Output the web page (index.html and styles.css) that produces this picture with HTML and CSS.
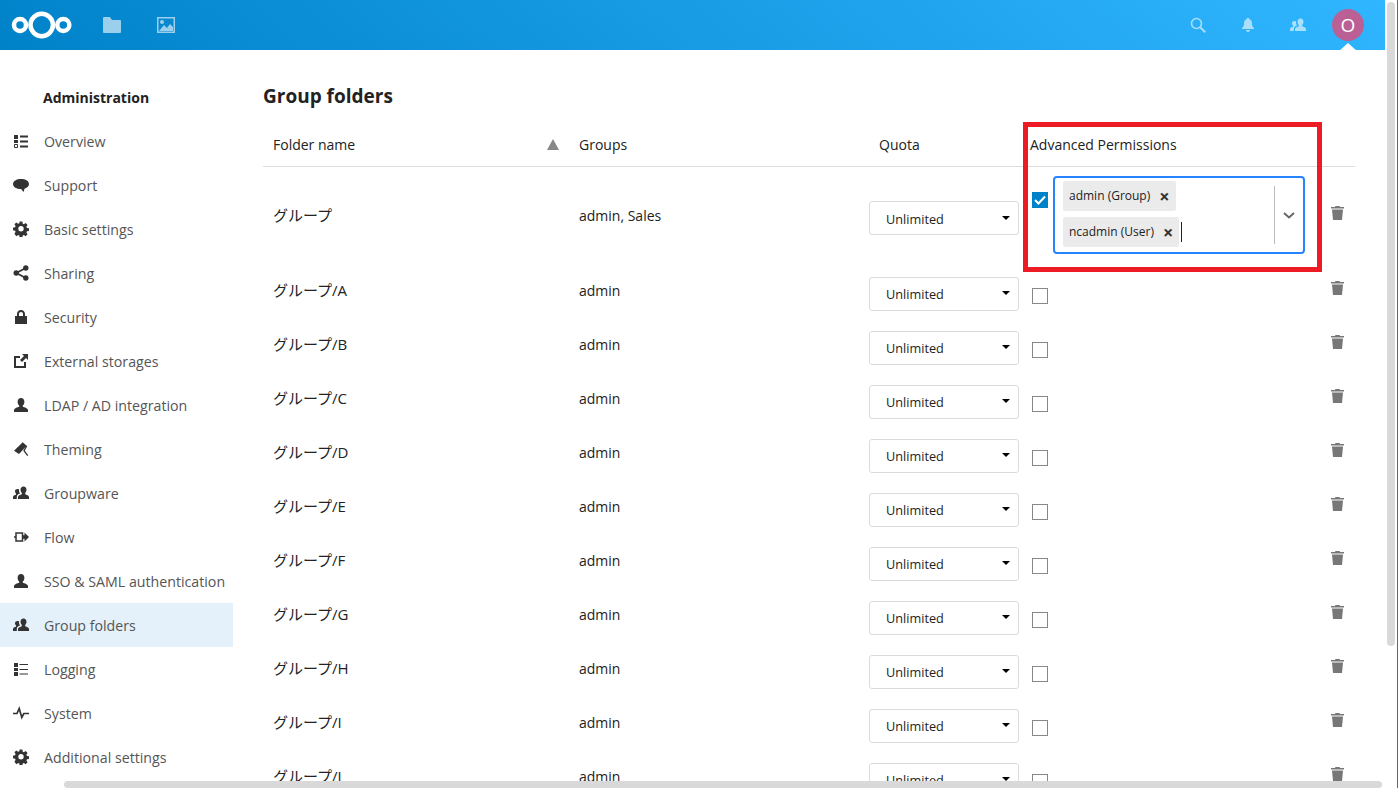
FILE: index.html
```html
<!DOCTYPE html>
<html lang="en">
<head>
    <meta charset="UTF-8">
    <meta name="viewport" content="width=device-width, initial-scale=1.0">
    <title>Group folders</title>
    <link rel="stylesheet" href="styles.css">
</head>
<body>
    <svg class="sprite" width="0" height="0">
        <symbol id="i-list" viewBox="0 0 16 16"><path d="M1 2h4v4H1zM7 2.500h8v2H7zM1 7h4v3H1zM7 7.500h8v2H7zM7 12.500h8v2H7z"/><path d="M1.500 11.500h3v3h-3z" fill="none" stroke="currentColor"/></symbol>
        <symbol id="i-log" viewBox="0 0 16 16"><path d="M1 2h4v4H1zM1 7h4v3H1zM1 11h4v4H1zM6.500 3h8.500v1H6.500zM6.500 8h8.500v1H6.500zM6.500 12.500h8.500v1H6.500z"/></symbol>
        <symbol id="i-chat" viewBox="0 0 16 16"><path d="M8 2c4.400 0 8 1.900 8 5 0 2.400-2.200 4.100-4.600 4.700-.1 1.100-.3 2.100-.9 3.300-.9-1.100-1.700-2.200-2.300-3-4.600 0-8.200-2-8.200-5s3.600-5 8-5z"/></symbol>
        <symbol id="i-gear" viewBox="0 0 16 16"><path fill-rule="evenodd" d="M6.500 0h3l.4 2.300 1.300.6 2-1.300 2.100 2.100-1.300 2 .6 1.300 2.300.4v3l-2.300.4-.6 1.300 1.300 2-2.100 2.100-2-1.300-1.300.6-.4 2.300h-3l-.4-2.300-1.300-.6-2 1.300L.7 13.400l1.300-2-.6-1.300L-.9 9.700v-3l2.300-.4.6-1.300-1.300-2L2.800 1l2 1.300 1.300-.6zM8 5a3 3 0 1 0 0 6 3 3 0 0 0 0-6z" transform="translate(.8 .6) scale(.9)"/></symbol>
        <symbol id="i-share" viewBox="0 0 16 16"><circle cx="12.800" cy="3" r="2.700"/><circle cx="12.800" cy="13" r="2.700"/><circle cx="3.200" cy="8" r="2.700"/><path d="M3.200 8l9.600-5M3.200 8l9.600 5" stroke="currentColor" stroke-width="1.800" fill="none"/></symbol>
        <symbol id="i-lock" viewBox="0 0 16 16"><path fill-rule="evenodd" d="M8 1c2.500 0 4 1.800 4 4v2h2v8H2V7h2V5c0-2.200 1.500-4 4-4zm0 2C6.800 3 6 3.800 6 5v2h4V5c0-1.200-.8-2-2-2z"/></symbol>
        <symbol id="i-ext" viewBox="0 0 16 16"><path d="M1 3h6v2H3v8h8V9h2v6H1z"/><path d="M9 1h6v6l-2-2-4 4-2-2 4-4z"/></symbol>
        <symbol id="i-user" viewBox="0 0 16 16"><path d="M8 1c2 0 3.400 1.600 3.400 3.700 0 1.600-.7 3-1.600 3.900v1.200c1.800.6 5.200 1.500 5.200 3.400V15H1v-1.800c0-1.900 3.400-2.800 5.200-3.400V8.600C5.300 7.700 4.600 6.300 4.600 4.700 4.600 2.600 6 1 8 1z"/></symbol>
        <symbol id="i-brush" viewBox="0 0 16 16"><path d="M1 9.700L9.700 1.300l4 3.400L6 13z"/><path d="M13.700 5L11 9.700l3.700 5" fill="none" stroke="currentColor" stroke-width="1.300"/></symbol>
        <symbol id="i-group" viewBox="0 0 16 16"><path d="M10.500 1.500c1.900 0 3 1.500 3 3.300 0 1.300-.6 2.400-1.300 3.200v1.200c1.400.5 3.800 1.200 3.800 2.800V14H5v-2c0-1.600 2.400-2.300 3.800-2.800V8c-.7-.8-1.300-1.900-1.300-3.200 0-1.800 1.100-3.300 3-3.300z"/><path d="M4.700 4c.5 0 1 .1 1.400.4-.3 1.300 0 2.700.9 3.900v.3C5 9.300 3.800 10.400 3.800 12v2H0v-2c0-1.200 1.500-1.900 3-2.300V8.600C2.300 7.900 2 7 2 6.200 2 4.900 3.100 4 4.700 4z"/></symbol>
        <symbol id="i-flow" viewBox="0 0 16 16"><path d="M3 4h6.500v8H3zM1 8h2" fill="none" stroke="currentColor" stroke-width="1.500"/><path d="M9 6.300h2.500V3.500L16 8l-4.500 4.500V9.700H9z"/></symbol>
        <symbol id="i-pulse" viewBox="0 0 16 16"><path d="M0 8.500h4l2.200-5 2.600 9 2-4H16" fill="none" stroke="currentColor" stroke-width="1.700"/></symbol>
        <symbol id="i-trash" viewBox="0 0 13 14"><path d="M4.500 0h4l.5 1h4v1.500H0V1h4zM1 3.500h11L11 14H2z"/></symbol>
    </svg>

    <header class="topbar">
        <div class="topbar-left">
            <svg class="logo" width="62" height="30" viewBox="0 0 62 30">
                <circle cx="9" cy="15" r="6" />
                <circle cx="30.700" cy="15" r="11.200" />
                <circle cx="52.300" cy="15" r="6" />
            </svg>
            <svg class="app-icon" width="18" height="16" viewBox="0 0 18 16"><path d="M0 1a1 1 0 0 1 1-1h6l2 3h8a1 1 0 0 1 1 1v11a1 1 0 0 1-1 1H1a1 1 0 0 1-1-1z"/></svg>
            <svg class="app-icon" width="18" height="16" viewBox="0 0 18 16"><path fill-rule="evenodd" d="M0 0h18v16H0zm1.500 1.500v13h15v-13z"/><circle cx="5" cy="5" r="2"/><path d="M2 14l5-6 3 3 3-4 3 3v4z"/></svg>
        </div>
        <div class="topbar-right">
            <svg class="top-icon" width="16" height="16" viewBox="0 0 16 16"><circle cx="6.500" cy="6.500" r="5" fill="none" stroke="#fff" stroke-width="1.600"/><path d="M10.200 10.200l5 5" stroke="#fff" stroke-width="2"/></svg>
            <svg class="top-icon" width="12" height="14" viewBox="0 0 12 14"><path d="M6 0c1 0 1.500.6 1.600 1.300C9.500 2 10 3.800 10 6c0 2 .8 3 2 4v1H0v-1c1.200-1 2-2 2-4 0-2.200.5-4 2.400-4.700C4.500.6 5 0 6 0zM4 12h4a2 2 0 0 1-4 0z" fill="#fff"/></svg>
            <svg class="top-icon" width="16" height="16" viewBox="0 0 16 16"><use href="#i-group" color="#fff" fill="#fff"/></svg>
            <div class="avatar">O</div>
        </div>
    </header>

    <div class="layout">
        <nav class="sidebar">
            <div class="side-title">Administration</div>
            <a class="side-item"><svg><use href="#i-list"/></svg>Overview</a>
            <a class="side-item"><svg><use href="#i-chat"/></svg>Support</a>
            <a class="side-item"><svg><use href="#i-gear"/></svg>Basic settings</a>
            <a class="side-item"><svg><use href="#i-share"/></svg>Sharing</a>
            <a class="side-item"><svg><use href="#i-lock"/></svg>Security</a>
            <a class="side-item"><svg><use href="#i-ext"/></svg>External storages</a>
            <a class="side-item"><svg><use href="#i-user"/></svg>LDAP / AD integration</a>
            <a class="side-item"><svg><use href="#i-brush"/></svg>Theming</a>
            <a class="side-item"><svg><use href="#i-group"/></svg>Groupware</a>
            <a class="side-item"><svg><use href="#i-flow"/></svg>Flow</a>
            <a class="side-item"><svg><use href="#i-user"/></svg>SSO &amp; SAML authentication</a>
            <a class="side-item active"><svg><use href="#i-group"/></svg>Group folders</a>
            <a class="side-item"><svg><use href="#i-log"/></svg>Logging</a>
            <a class="side-item"><svg><use href="#i-pulse"/></svg>System</a>
            <a class="side-item"><svg><use href="#i-gear"/></svg>Additional settings</a>
        </nav>

        <main class="content">
            <h1>Group folders</h1>
            <div class="table">
                <div class="row head">
                    <div class="cell name-head">Folder name<span class="sort"></span></div>
                    <div class="cell">Groups</div>
                    <div class="cell">Quota</div>
                    <div class="cell adv-head">Advanced Permissions</div>
                </div>

                <div class="row first">
                    <div class="cell name">グループ</div>
                    <div class="cell">admin, Sales</div>
                    <div class="select">Unlimited<span class="caret"></span></div>
                    <div class="adv">
                        <span class="check on"><svg width="12" height="10" viewBox="0 0 12 10"><path d="M1 5l3.500 3.500L11 1.500" fill="none" stroke="#fff" stroke-width="2"/></svg></span>
                        <div class="multi">
                            <div class="tags">
                                <span class="tag">admin (Group)<b>×</b></span>
                                <span class="tag-line"><span class="tag">ncadmin (User)<b>×</b></span><i class="cursor"></i></span>
                            </div>
                            <div class="multi-arrow"><svg width="12" height="7" viewBox="0 0 12 7"><path d="M1 1l5 4.500L11 1" fill="none" stroke="#666" stroke-width="2"/></svg></div>
                        </div>
                    </div>
                    <svg class="trash"><use href="#i-trash"/></svg>
                </div>

                <div class="row"><div class="cell name">グループ/A</div><div class="cell">admin</div><div class="select">Unlimited<span class="caret"></span></div><div class="adv"><span class="check"></span></div><svg class="trash"><use href="#i-trash"/></svg></div>
                <div class="row"><div class="cell name">グループ/B</div><div class="cell">admin</div><div class="select">Unlimited<span class="caret"></span></div><div class="adv"><span class="check"></span></div><svg class="trash"><use href="#i-trash"/></svg></div>
                <div class="row"><div class="cell name">グループ/C</div><div class="cell">admin</div><div class="select">Unlimited<span class="caret"></span></div><div class="adv"><span class="check"></span></div><svg class="trash"><use href="#i-trash"/></svg></div>
                <div class="row"><div class="cell name">グループ/D</div><div class="cell">admin</div><div class="select">Unlimited<span class="caret"></span></div><div class="adv"><span class="check"></span></div><svg class="trash"><use href="#i-trash"/></svg></div>
                <div class="row"><div class="cell name">グループ/E</div><div class="cell">admin</div><div class="select">Unlimited<span class="caret"></span></div><div class="adv"><span class="check"></span></div><svg class="trash"><use href="#i-trash"/></svg></div>
                <div class="row"><div class="cell name">グループ/F</div><div class="cell">admin</div><div class="select">Unlimited<span class="caret"></span></div><div class="adv"><span class="check"></span></div><svg class="trash"><use href="#i-trash"/></svg></div>
                <div class="row"><div class="cell name">グループ/G</div><div class="cell">admin</div><div class="select">Unlimited<span class="caret"></span></div><div class="adv"><span class="check"></span></div><svg class="trash"><use href="#i-trash"/></svg></div>
                <div class="row"><div class="cell name">グループ/H</div><div class="cell">admin</div><div class="select">Unlimited<span class="caret"></span></div><div class="adv"><span class="check"></span></div><svg class="trash"><use href="#i-trash"/></svg></div>
                <div class="row"><div class="cell name">グループ/I</div><div class="cell">admin</div><div class="select">Unlimited<span class="caret"></span></div><div class="adv"><span class="check"></span></div><svg class="trash"><use href="#i-trash"/></svg></div>
                <div class="row"><div class="cell name">グループ/J</div><div class="cell">admin</div><div class="select">Unlimited<span class="caret"></span></div><div class="adv"><span class="check"></span></div><svg class="trash"><use href="#i-trash"/></svg></div>
            </div>
        </main>
    </div>

    <div class="highlight"></div>
    <div class="scroll-v"></div>
    <div class="scroll-h"></div>
    <div class="edge"></div>
</body>
</html>
```

FILE: styles.css
```css
body {
    margin: 0;
    height: 788px;
    overflow: hidden;
    position: relative;
    background-color: #fff;
    color: #222;
    font-family: "Open Sans", "Noto Sans CJK JP", sans-serif;
    font-size: 14px;
}
.sprite {
    position: absolute;
}
.topbar {
    width: 1385px;
    height: 50px;
    display: flex;
    justify-content: space-between;
    align-items: center;
    background: linear-gradient(40deg, #0082c9 0%, #30b6ff 100%);
}
.topbar-left {
    display: flex;
    align-items: center;
    padding-left: 11px;
}
.logo {
    margin-right: 30px;
    fill: none;
    stroke: #fff;
    stroke-width: 4.5;
}
.app-icon {
    margin-right: 36px;
    fill: #fff;
    opacity: 0.6;
}
.topbar-right {
    display: flex;
    align-items: center;
    position: relative;
    padding-right: 21px;
}
.top-icon {
    opacity: 0.6;
    margin-right: 36px;
}
.avatar {
    width: 32px;
    height: 32px;
    border-radius: 50%;
    background-color: #bb6094;
    color: #fff;
    font-size: 19px;
    line-height: 32px;
    text-align: center;
    margin-left: -10px;
    position: relative;
}
.avatar::after {
    content: "";
    position: absolute;
    left: 6px;
    top: 34px;
    border-left: 10px solid transparent;
    border-right: 10px solid transparent;
    border-bottom: 9px solid #fff;
}

.layout {
    display: flex;
}
.sidebar {
    width: 233px;
    flex: none;
    padding-top: 26px;
    color: #555;
    font-size: 14.2px;
}
.side-title {
    height: 43px;
    line-height: 44px;
    padding-left: 43px;
    font-size: 14px;
    font-weight: bold;
    color: #222;
}
.side-item {
    display: flex;
    align-items: center;
    height: 44px;
    padding-left: 13px;
    white-space: nowrap;
}
.side-item svg {
    width: 16px;
    height: 16px;
    margin-right: 15px;
    fill: #333;
    color: #333;
    flex: none;
}
.side-item.active {
    background-color: #e4f1fa;
}

.content {
    width: 1092px;
    padding-left: 30px;
}
h1 {
    margin: 0;
    padding-top: 33px;
    height: 39px;
    line-height: 26px;
    font-size: 19px;
    font-weight: bold;
}
.row {
    display: grid;
    grid-template-columns: 306px 300px 150px 316px 20px;
    height: 54px;
    align-items: center;
}
.cell {
    padding-left: 10px;
    margin-top: -8px;
}
.name {
    font-size: 15px;
    margin-top: -10px;
}
.head {
    height: 44px;
    border-bottom: 1px solid #ddd;
}
.head .cell {
    margin-top: 0;
}
.name-head {
    display: flex;
    justify-content: space-between;
    padding-right: 10px;
    align-items: center;
}
.sort {
    width: 0;
    height: 0;
    border-left: 6px solid transparent;
    border-right: 6px solid transparent;
    border-bottom: 11px solid #888;
}
.adv-head {
    padding-left: 11px;
    white-space: nowrap;
}
.row.first {
    height: 100px;
}
.first .cell {
    margin-top: -4px;
}
.first .name {
    margin-top: -6px;
}
.first .select {
    margin-top: 2px;
    padding-top: 2px;
}
.select {
    height: 34px;
    width: 150px;
    box-sizing: border-box;
    border: 1px solid #dbdbdb;
    border-radius: 3px;
    padding: 0 8px 0 16px;
    display: flex;
    align-items: center;
    justify-content: space-between;
    font-size: 12.7px;
}
.caret {
    border-left: 4px solid transparent;
    border-right: 4px solid transparent;
    border-top: 4px solid #000;
    margin-bottom: 2px;
}
.adv {
    display: flex;
    align-items: center;
    padding-left: 13px;
}
.first .adv {
    margin-top: -4px;
}
.check {
    width: 16px;
    height: 16px;
    box-sizing: border-box;
    border: 1px solid #888;
    flex: none;
    display: flex;
    align-items: center;
    justify-content: center;
    margin-top: 4px;
}
.check.on {
    background-color: #0082c9;
    border-color: #0082c9;
    align-self: flex-start;
    margin-top: 16px;
}
.multi {
    width: 252px;
    height: 78px;
    box-sizing: border-box;
    margin-left: 5px;
    border: 2px solid #2684ff;
    border-radius: 4px;
    display: flex;
    align-items: center;
    font-size: 12px;
}
.tags {
    flex: 1;
    padding-left: 8px;
    margin-top: -2px;
    display: flex;
    flex-direction: column;
    align-items: flex-start;
    gap: 6px;
}
.tag-line {
    display: flex;
    align-items: center;
}
.tag {
    height: 30px;
    line-height: 30px;
    background-color: #ebebeb;
    border-radius: 2px;
    padding: 0 6px;
    display: inline-flex;
    align-items: center;
    white-space: nowrap;
}
.tag b {
    margin-left: 9px;
    font-size: 18px;
    line-height: 16px;
    color: #333;
}
.cursor {
    width: 1px;
    height: 20px;
    margin-left: 2px;
    background-color: #222;
}
.multi-arrow {
    width: 28px;
    height: 58px;
    border-left: 1px solid #bbb;
    display: flex;
    align-items: center;
    justify-content: center;
}
.trash {
    width: 13px;
    height: 14px;
    fill: #777;
    margin: -13px 0 0 -4px;
}
.first .trash {
    margin-top: -8px;
}

.highlight {
    position: absolute;
    left: 1023px;
    top: 122px;
    width: 299px;
    height: 150px;
    box-sizing: border-box;
    border: 5px solid #ed1c24;
}
.scroll-v {
    position: absolute;
    left: 1387px;
    top: 2px;
    width: 8px;
    height: 644px;
    border-radius: 4px;
    background-color: #d9d9d9;
}
.scroll-h {
    position: absolute;
    left: 64px;
    top: 781px;
    width: 1318px;
    height: 7px;
    border-radius: 4px;
    background-color: #d9d9d9;
}
.edge {
    position: absolute;
    right: 0;
    top: 0;
    bottom: 0;
    width: 1px;
    background-color: #666;
}
```
